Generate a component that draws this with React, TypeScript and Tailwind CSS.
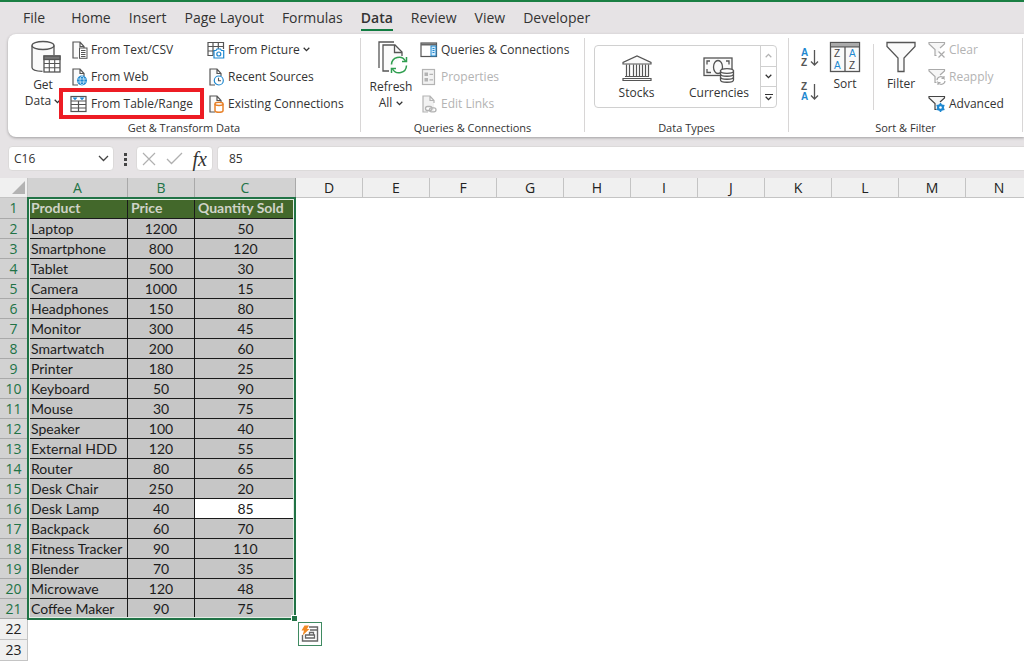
import { useState } from 'react';
import type { ReactNode } from 'react';

const tabs = ['File', 'Home', 'Insert', 'Page Layout', 'Formulas', 'Data', 'Review', 'View', 'Developer'];

const rows: [string, number, number][] = [
  ['Laptop', 1200, 50],
  ['Smartphone', 800, 120],
  ['Tablet', 500, 30],
  ['Camera', 1000, 15],
  ['Headphones', 150, 80],
  ['Monitor', 300, 45],
  ['Smartwatch', 200, 60],
  ['Printer', 180, 25],
  ['Keyboard', 50, 90],
  ['Mouse', 30, 75],
  ['Speaker', 100, 40],
  ['External HDD', 120, 55],
  ['Router', 80, 65],
  ['Desk Chair', 250, 20],
  ['Desk Lamp', 40, 85],
  ['Backpack', 60, 70],
  ['Fitness Tracker', 90, 110],
  ['Blender', 70, 35],
  ['Microwave', 120, 48],
  ['Coffee Maker', 90, 75],
];

const emptyColumns = ['D', 'E', 'F', 'G', 'H', 'I', 'J', 'K', 'L', 'M', 'N'];

/* ---------- Icons ---------- */

function Chevron({ className = '' }: { className?: string }) {
  return (
    <svg width="7" height="5" viewBox="0 0 7 5" fill="none" stroke="currentColor" strokeWidth="1.3" className={className}>
      <path d="M0.7 0.8 3.5 3.6 6.3 0.8" />
    </svg>
  );
}

function DatabaseIcon() {
  return (
    <svg width="34" height="34" viewBox="0 0 34 34" fill="none" stroke="#555" strokeWidth="1.3" className="self-end">
      <path d="M3 5.5v22c0 2.5 5 4 11 4h3V16h8V5.5" fill="#fafafa" stroke="none" />
      <ellipse cx="14" cy="5.5" rx="11" ry="4" fill="#fafafa" />
      <path d="M3 5.5v22c0 2 4 3.600 10.500 3.900M25 5.500V15" />
      <rect x="15" y="16" width="16" height="16" fill="#fff" />
      <rect x="15" y="16" width="16" height="3.500" fill="#777" />
      <path d="M15 23.500h16M15 27.800h16M20.300 19v13M25.700 19v13" strokeWidth="1.100" />
    </svg>
  );
}

function PageBase({ color = '#555', fill = '#fafafa' }: { color?: string; fill?: string }) {
  return (
    <>
      <path d="M3 1h7l4 4.500V17H3z" fill={fill} />
      <path d="M8 17H3V1h7l4 4.500V8M10 1v4.500h4" stroke={color} strokeWidth="1.200" />
    </>
  );
}

function TextCsvIcon() {
  return (
    <svg width="18" height="18" viewBox="0 0 18 18" fill="none">
      <PageBase />
      <rect x="9.500" y="7" width="7.500" height="10.300" fill="#fff" stroke="#555" />
      <path d="M11 9.500h4.500M11 11.500h4.500M11 13.500h4.500M11 15.500h4.500" stroke="#555" />
    </svg>
  );
}

function WebIcon() {
  return (
    <svg width="18" height="18" viewBox="0 0 18 18" fill="none">
      <PageBase />
      <circle cx="12" cy="12.500" r="5" fill="#1e88d0" />
      <ellipse cx="12" cy="12.500" rx="2" ry="4.500" stroke="#d4ecfa" strokeWidth="0.800" />
      <path d="M7.500 11h9M7.500 14h9" stroke="#d4ecfa" strokeWidth="0.800" />
    </svg>
  );
}

function TableRangeIcon() {
  return (
    <svg width="18" height="18" viewBox="0 0 18 18" fill="none" stroke="#555" strokeWidth="1.200">
      <rect x="1" y="1.500" width="15" height="15" fill="#fff" />
      <path d="M1 6h15M1 9.500h15M1 13h15M8.500 6v10.500" />
      <path d="M3 2.800h4L5 5zM10 2.800h4L12 5z" fill="#1e88d0" stroke="#1e88d0" strokeWidth="0.500" />
    </svg>
  );
}

function PictureIcon() {
  return (
    <svg width="18" height="18" viewBox="0 0 18 18" fill="none" stroke="#555" strokeWidth="1.200">
      <path d="M6 14.500H1V1.500h15.500V8M1 5.500h15.500M1 10h6M6 1.500v13M11.300 1.500V8" />
      <path d="M7 9.500h2l1-1.500h3.500l1 1.500h2.200V17H7z" fill="#fff" stroke="#1e88d0" />
      <circle cx="11.800" cy="13" r="2" stroke="#1e88d0" />
    </svg>
  );
}

function RecentIcon() {
  return (
    <svg width="18" height="18" viewBox="0 0 18 18" fill="none">
      <PageBase />
      <circle cx="11.800" cy="12.500" r="4.500" fill="#fff" stroke="#1e88d0" strokeWidth="1.200" />
      <path d="M11.500 9.800v3h2.500" stroke="#555" strokeWidth="1.100" />
    </svg>
  );
}

function ConnectionsIcon() {
  return (
    <svg width="18" height="18" viewBox="0 0 18 18" fill="none">
      <PageBase />
      <path d="M8 8.800c0-2 8-2 8 0v7c0 2-8 2-8 0z" fill="#fff" stroke="#e8822a" strokeWidth="1.500" />
      <path d="M8 9c0 2 8 2 8 0" stroke="#e8822a" strokeWidth="1.400" />
    </svg>
  );
}

function RefreshIcon() {
  return (
    <svg width="36" height="34" viewBox="-4 0 36 34" fill="none" stroke="#555" strokeWidth="1.300">
      <path d="M2 28V2h15" />
      <path d="M12 31H6V5h12l7 7v4" fill="#fafafa" />
      <path d="M17.500 5v7.500H25" />
      <g stroke="#2f9e4f" strokeWidth="1.500">
        <path d="M14.500 24.500a7.500 7.500 0 0 1 14-3.500M29.500 25.500a7.500 7.500 0 0 1-14 3.500" />
        <path d="M29.500 17v4.500H25M14.500 33v-4.500H19" />
      </g>
    </svg>
  );
}

function QueriesIcon() {
  return (
    <svg width="18" height="18" viewBox="0 0 18 18" fill="none">
      <rect x="1" y="2" width="15.500" height="13.500" fill="#fff" stroke="#555" strokeWidth="1.200" />
      <path d="M1 3.500h15.500" stroke="#666" strokeWidth="2" />
      <rect x="11" y="5" width="5" height="10" fill="#d3eafa" stroke="#1e88d0" />
      <path d="M12.500 7.500h2M12.500 9.500h2M12.500 11.500h2" stroke="#1e88d0" />
    </svg>
  );
}

function PropertiesIcon() {
  return (
    <svg width="18" height="18" viewBox="0 0 18 18" fill="none" stroke="#b3b3b3">
      <rect x="2.500" y="1.500" width="12" height="15" fill="#f2f2f2" strokeWidth="1.200" />
      <rect x="5" y="5" width="2.500" height="2.500" fill="#b3b3b3" />
      <rect x="5" y="10.500" width="2.500" height="2.500" fill="#b3b3b3" />
      <path d="M9.500 6.300H13M9.500 11.800H13" strokeWidth="1.200" />
    </svg>
  );
}

function EditLinksIcon() {
  return (
    <svg width="18" height="18" viewBox="0 0 18 18" fill="none">
      <PageBase color="#b3b3b3" fill="#f2f2f2" />
      <rect x="5.500" y="11.500" width="6.500" height="4" rx="2" fill="#fff" stroke="#b3b3b3" strokeWidth="1.300" />
      <rect x="9.500" y="12.800" width="6.500" height="4" rx="2" stroke="#b3b3b3" strokeWidth="1.300" />
    </svg>
  );
}

function BankIcon() {
  return (
    <svg width="32" height="30" viewBox="0 0 32 30" fill="none" stroke="#555" strokeWidth="1.200">
      <path d="M2 10V8.500L16 2l14 6.500V10z" fill="#fafafa" />
      <path d="M5.500 10.500v12M8.500 10.500v12M12.500 10.500v12M15.500 10.500v12M18.500 10.500v12M21.500 10.500v12M24.500 10.500v12M27.500 10.500v12" />
      <path d="M4 22.500h24M2 26.500v-2h28v2z" fill="#fafafa" />
    </svg>
  );
}

function CurrencyIcon() {
  return (
    <svg width="34" height="30" viewBox="0 0 34 30" fill="none" stroke="#555" strokeWidth="1.300">
      <rect x="2" y="4" width="28" height="17.500" fill="#fafafa" />
      <path d="M8 7H5v3.500M24 7h3v3.500M5 15v3.500h4" />
      <ellipse cx="16" cy="13" rx="4.500" ry="6.500" />
      <path d="M18.500 17v9c0 3 13 3 13 0v-9z" fill="#fff" />
      <ellipse cx="25" cy="17" rx="6.500" ry="2.300" fill="#fff" />
      <path d="M18.500 20c0 3 13 3 13 0M18.500 23c0 3 13 3 13 0" />
    </svg>
  );
}

function SortOrderIcon({ descending = false }: { descending?: boolean }) {
  return (
    <svg width="20" height="22" viewBox="0 0 20 22" fill="none">
      <g fontFamily="Liberation Sans" fontSize="10" fontWeight="700">
        <text x="1" y="10" fill={descending ? '#555' : '#1e88d0'}>{descending ? 'Z' : 'A'}</text>
        <text x="1" y="20" fill={descending ? '#1e88d0' : '#555'}>{descending ? 'A' : 'Z'}</text>
      </g>
      <path d="M14.500 4v15M11 15.500l3.500 3.500 3.500-3.500" stroke="#555" strokeWidth="1.300" />
    </svg>
  );
}

function SortIcon() {
  return (
    <svg width="32" height="32" viewBox="0 0 32 32" fill="none">
      <rect x="1.500" y="1.500" width="29" height="29" fill="#fafafa" stroke="#555" strokeWidth="1.300" />
      <rect x="2" y="2" width="28" height="3.500" fill="#aaa" />
      <path d="M1.500 5.800h29M16 6v24" stroke="#555" strokeWidth="1.300" />
      <g fontFamily="Liberation Sans" fontSize="10">
        <text x="5" y="16" fill="#444">Z</text>
        <text x="5" y="28" fill="#1e88d0">A</text>
        <text x="20" y="16" fill="#1e88d0">A</text>
        <text x="20" y="28" fill="#444">Z</text>
      </g>
    </svg>
  );
}

function FunnelIcon() {
  return (
    <svg width="32" height="32" viewBox="0 0 32 32" fill="none" stroke="#555" strokeWidth="1.300">
      <path d="M2 1.500h28v4L19 17v13.500h-6V17L2 5.500z" fill="#fafafa" />
    </svg>
  );
}

function SmallFunnel({ kind }: { kind: 'clear' | 'reapply' | 'advanced' }) {
  const color = kind === 'advanced' ? '#444' : '#aaa';
  return (
    <svg width="18" height="18" viewBox="0 0 18 18" fill="none" stroke={color} strokeWidth="1.200">
      <path d="M8.500 14.500H7V8.500L1 3V1.500h15.500V3L12 7" fill="#f6f6f6" />
      {kind === 'clear' && <path d="M10.500 10.500l6 6M16.500 10.500l-6 6" />}
      {kind === 'reapply' && (
        <path d="M9 12a3.800 3.800 0 0 1 7-1.500V8M16 10.500h-2.500M17 13a3.800 3.800 0 0 1-7 1.500V17M10 14.500h2.500" />
      )}
      {kind === 'advanced' && (
        <g stroke="#1e88d0">
          <circle cx="12.500" cy="12.500" r="2.500" strokeWidth="2" fill="#fff" />
          <path d="M12.500 8v9M8.600 10.300l7.800 4.500M8.600 14.800l7.800-4.500" strokeWidth="1.600" />
          <circle cx="12.500" cy="12.500" r="1.300" fill="#fff" stroke="none" />
        </g>
      )}
    </svg>
  );
}

function QuickAnalysisIcon() {
  return (
    <svg width="20" height="20" viewBox="0 0 20 20" fill="none">
      <path d="M9 3h8.500v14H2.500v-6M10 6h7" stroke="#666" strokeWidth="1.400" />
      <path d="M5.500 14h9v-3h-9zM9.500 11V8.500h4V11" stroke="#666" strokeWidth="1.300" />
      <path d="M4.500 1.500H9L7 5h2.500L2.500 11.500l1.500-5H1.500z" fill="#f08a24" />
    </svg>
  );
}

/* ---------- Ribbon ---------- */

function Group({ label, className, children }: { label: string; className: string; children: ReactNode }) {
  return (
    <section aria-label={label} className={`flex shrink-0 flex-col ${className}`}>
      <div className="flex h-[86px] items-start">{children}</div>
      <p className="text-center text-[11px] leading-4 text-[#333]">{label}</p>
    </section>
  );
}

function Divider() {
  return <div className="my-1 w-px shrink-0 bg-[#d8d6d6]" />;
}

interface ItemProps {
  icon: ReactNode;
  label: string;
  menu?: boolean;
  disabled?: boolean;
  highlighted?: boolean;
}

function Item({ icon, label, menu, disabled, highlighted }: ItemProps) {
  return (
    <button
      type="button"
      disabled={disabled}
      className={`flex h-[23px] items-center gap-[3px] px-[7px] whitespace-nowrap disabled:text-[#b3b3b3] ${
        highlighted ? 'relative z-10 bg-white outline-4 outline-[#ed1c24]' : ''
      }`}
    >
      {icon}
      <span>{label}</span>
      {menu && <Chevron />}
    </button>
  );
}

function Ribbon() {
  return (
    <div className="ml-2 flex overflow-hidden rounded-l-lg bg-white pb-px text-[12px] leading-4 text-[#333] shadow-[0_1px_3px_rgba(0,0,0,0.3)]">
      <Group label="Get & Transform Data" className="w-[352px]">
        <button type="button" className="ml-[15px] flex w-10 shrink-0 flex-col items-center pt-[6px]">
          <DatabaseIcon />
          <span className="pt-[3px]">Get</span>
          <span className="flex items-center gap-[3px]">
            Data <Chevron />
          </span>
        </button>
        <div className="flex flex-col gap-1 pt-1">
          <Item icon={<TextCsvIcon />} label="From Text/CSV" />
          <Item icon={<WebIcon />} label="From Web" />
          <Item icon={<TableRangeIcon />} label="From Table/Range" highlighted />
        </div>
        <div className="flex flex-col gap-1 pt-1">
          <Item icon={<PictureIcon />} label="From Picture" menu />
          <Item icon={<RecentIcon />} label="Recent Sources" />
          <Item icon={<ConnectionsIcon />} label="Existing Connections" />
        </div>
      </Group>
      <Divider />
      <Group label="Queries & Connections" className="w-[223px]">
        <button type="button" className="ml-2 flex w-11 shrink-0 flex-col items-center pt-[6px]">
          <RefreshIcon />
          <span className="pt-[5px]">Refresh</span>
          <span className="flex items-center gap-1">
            All <Chevron />
          </span>
        </button>
        <div className="flex flex-col gap-1 pt-1">
          <Item icon={<QueriesIcon />} label="Queries & Connections" />
          <Item icon={<PropertiesIcon />} label="Properties" disabled />
          <Item icon={<EditLinksIcon />} label="Edit Links" disabled />
        </div>
      </Group>
      <Divider />
      <Group label="Data Types" className="w-[203px]">
        <div className="mt-[11px] ml-[9px] flex h-[63px] rounded border border-[#d0d0d0]">
          <button type="button" className="flex w-[83px] flex-col items-center pt-2">
            <BankIcon />
            <span className="pt-px">Stocks</span>
          </button>
          <button type="button" className="flex w-[82px] flex-col items-center pt-2">
            <CurrencyIcon />
            <span className="pt-px">Currencies</span>
          </button>
          <div className="flex w-4 flex-col divide-y divide-[#d0d0d0] border-l border-[#d0d0d0]">
            <button type="button" aria-label="Previous row" className="flex flex-1 items-center justify-center text-[#b3b3b3]">
              <Chevron className="rotate-180" />
            </button>
            <button type="button" aria-label="Next row" className="flex flex-1 items-center justify-center">
              <Chevron />
            </button>
            <button type="button" aria-label="More data types" className="flex flex-1 flex-col items-center justify-center gap-px">
              <span className="h-px w-2 bg-[#333]" />
              <Chevron />
            </button>
          </div>
        </div>
      </Group>
      <Divider />
      <Group label="Sort & Filter" className="w-[233px]">
        <div className="ml-[11px] flex flex-col gap-3 pt-3">
          <button type="button" aria-label="Sort A to Z">
            <SortOrderIcon />
          </button>
          <button type="button" aria-label="Sort Z to A">
            <SortOrderIcon descending />
          </button>
        </div>
        <button type="button" className="ml-[7px] flex w-9 flex-col items-center pt-[7px]">
          <SortIcon />
          <span className="pt-[3px]">Sort</span>
        </button>
        <div className="mt-[10px] ml-[10px] h-[66px] w-px bg-[#d8d6d6]" />
        <button type="button" className="ml-[7px] flex w-10 flex-col items-center pt-[7px]">
          <FunnelIcon />
          <span className="pt-[3px]">Filter</span>
        </button>
        <div className="flex flex-col gap-1 pt-1">
          <Item icon={<SmallFunnel kind="clear" />} label="Clear" disabled />
          <Item icon={<SmallFunnel kind="reapply" />} label="Reapply" disabled />
          <Item icon={<SmallFunnel kind="advanced" />} label="Advanced" />
        </div>
      </Group>
      <Divider />
    </div>
  );
}

/* ---------- Formula bar ---------- */

function FormulaBar() {
  const [name, setName] = useState('C16');
  const [formula, setFormula] = useState('85');

  return (
    <div className="flex items-center pt-[9px] pb-[7px] pl-2 text-[12px] text-[#333]">
      <div className="flex h-[25px] w-[106px] items-center rounded border border-[#dcdada] bg-white pr-1 pl-[5px]">
        <input
          aria-label="Name box"
          value={name}
          onChange={(e) => setName(e.target.value)}
          className="w-0 flex-1 outline-none"
        />
        <button type="button" aria-label="Show names">
          <svg width="11" height="7" viewBox="0 0 11 7" fill="none" stroke="#444" strokeWidth="1.300">
            <path d="M1 1l4.500 4.500L10 1" />
          </svg>
        </button>
      </div>
      <svg width="21" height="14" viewBox="0 0 21 14" fill="#444">
        <rect x="10" y="1" width="3" height="3" />
        <rect x="10" y="6" width="3" height="3" />
        <rect x="10" y="11" width="3" height="3" />
      </svg>
      <div className="ml-px flex h-[25px] w-[77px] items-center justify-between rounded border border-[#dcdada] bg-white px-[5px]">
        <button type="button" aria-label="Cancel">
          <svg width="14" height="14" viewBox="0 0 14 14" stroke="#b0b0b0" strokeWidth="1.200">
            <path d="M1 1l12 12M13 1L1 13" />
          </svg>
        </button>
        <button type="button" aria-label="Enter">
          <svg width="17" height="13" viewBox="0 0 17 13" fill="none" stroke="#b0b0b0" strokeWidth="1.300">
            <path d="M1 7l4.500 4.500L16 1" />
          </svg>
        </button>
        <button type="button" aria-label="Insert function" className="font-['Liberation_Serif',serif] text-[20px] leading-5 italic">
          fx
        </button>
      </div>
      <input
        aria-label="Formula"
        value={formula}
        onChange={(e) => setFormula(e.target.value)}
        className="ml-1 h-[25px] min-w-0 flex-1 rounded-l border border-r-0 border-[#dcdada] bg-white pl-[11px] outline-none"
      />
    </div>
  );
}

/* ---------- Grid ---------- */

const selectedHead = 'border-[#a9a9a9] bg-[#d2d2d2] text-[#217346]';
const plainHead = 'border-[#c4c4c4] bg-[#f0f0f0] text-[#222]';
const rowHead = "border-r border-b text-center font-['Open_Sans',sans-serif] text-[14px] font-normal";

function Grid() {
  return (
    <div className="flex-1 overflow-hidden bg-white">
      <div className="relative">
        <table className="w-[1033px] min-w-full table-fixed border-separate border-spacing-0 font-['Lato','Open_Sans',sans-serif] text-[14px] leading-4 text-[#1c1c1c]">
          <thead className="font-['Open_Sans',sans-serif] text-[14px]">
            <tr className="h-5">
              <th className="w-7 border-r border-b border-[#c4c4c4] bg-[#f0f0f0] p-0">
                <svg width="13" height="13" viewBox="0 0 13 13" className="ml-3">
                  <path d="M13 0v13H0z" fill="#b3b3b3" />
                </svg>
              </th>
              <th className={`w-[100px] border-r p-0 font-normal ${selectedHead}`}>A</th>
              <th className={`w-[67px] border-r p-0 font-normal ${selectedHead}`}>B</th>
              <th className={`w-[101px] border-r p-0 font-normal ${selectedHead}`}>C</th>
              {emptyColumns.map((c) => (
                <th key={c} className={`border-r border-b p-0 font-normal ${plainHead}`}>
                  {c}
                </th>
              ))}
            </tr>
          </thead>
          <tbody>
            <tr className="h-[21px] bg-[#43682b] text-left text-[#d0d3c8]">
              <th className={`p-0 ${rowHead} ${selectedHead}`}>1</th>
              <th className="border-r border-b border-[#1a1a1a] p-0 pl-[3px]">Product</th>
              <th className="border-r border-b border-[#1a1a1a] p-0 pl-[3px]">Price</th>
              <th className="border-b border-[#1a1a1a] p-0 pl-[3px]">Quantity Sold</th>
              <td colSpan={emptyColumns.length} className="bg-white p-0" />
            </tr>
            {rows.map(([product, price, sold], i) => (
              <tr key={product} className="h-5">
                <th className={`p-0 ${rowHead} ${selectedHead}`}>{i + 2}</th>
                <td className="border-r border-b border-[#1a1a1a] bg-[#c6c6c6] p-0 pl-[3px]">{product}</td>
                <td className="border-r border-b border-[#1a1a1a] bg-[#c6c6c6] p-0 text-center">{price}</td>
                <td className={`border-b border-[#1a1a1a] p-0 text-center ${i === 14 ? 'bg-white' : 'bg-[#c6c6c6]'}`}>{sold}</td>
                <td colSpan={emptyColumns.length} className="p-0" />
              </tr>
            ))}
            {[22, 23].map((n) => (
              <tr key={n} className="h-[21px]">
                <th className={`p-0 ${rowHead} ${plainHead}`}>{n}</th>
                <td colSpan={emptyColumns.length + 3} className="p-0" />
              </tr>
            ))}
          </tbody>
        </table>

        {/* Selection outline, fill handle and quick analysis button */}
        <div className="pointer-events-none absolute top-[19px] bottom-[41px] left-[27px] w-[269px] border-2 border-[#217346] outline-1 -outline-offset-3 outline-[#e4ece6]">
          <span className="absolute -right-[3px] -bottom-[3px] size-[6px] border-t border-l border-white bg-[#217346]" />
        </div>
        <button
          type="button"
          aria-label="Quick analysis"
          className="absolute bottom-[15px] left-[298px] flex size-6 items-center justify-center border border-[#3f8a61] bg-white"
        >
          <QuickAnalysisIcon />
        </button>
      </div>
    </div>
  );
}

export default function App() {
  const [active, setActive] = useState('Data');

  return (
    <div className="flex min-h-screen flex-col overflow-hidden border-t-2 border-[#1a7f43] bg-[#e6e3e5] font-['Open_Sans','Noto_Sans',sans-serif]">
      <nav className="flex h-8 gap-[18px] pl-[23px] text-[14px] text-[#333]">
        {tabs.map((tab) => (
          <button
            key={tab}
            type="button"
            onClick={() => setActive(tab)}
            className={`relative h-8 leading-8 whitespace-nowrap first:mr-2 ${active === tab ? 'font-semibold' : ''}`}
          >
            {tab}
            {active === tab && <span className="absolute inset-x-0 bottom-[3px] h-[2px] bg-[#107c41]" />}
          </button>
        ))}
      </nav>
      <Ribbon />
      <FormulaBar />
      <Grid />
    </div>
  );
}
